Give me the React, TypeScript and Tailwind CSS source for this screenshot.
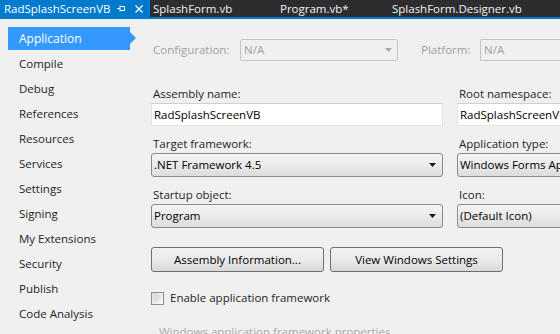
import React from "react";

const pages = [
  "Compile",
  "Debug",
  "References",
  "Resources",
  "Services",
  "Settings",
  "Signing",
  "My Extensions",
  "Security",
  "Publish",
  "Code Analysis",
];

const font = { fontFamily: '"Open Sans", "Noto Sans", sans-serif' };

function Arrow({ grey }: { grey?: boolean }) {
  return (
    <svg width="7" height="4" viewBox="0 0 7 4" className="shrink-0">
      <path d="M0 0H7L3.5 4Z" fill={grey ? "#a8a8a8" : "#1a1a1a"} />
    </svg>
  );
}

function Combo({ value, wide }: { value: string; wide?: boolean }) {
  return (
    <div className="h-[24px] flex items-center justify-between pl-[2px] pr-[6px] border border-[#8a8a8a] rounded-[3px] bg-gradient-to-b from-[#f4f4f4] via-[#ebebeb] to-[#dcdcdc] text-[#000]">
      <span className="whitespace-nowrap overflow-hidden">{value}</span>
      {wide ? <Arrow /> : null}
    </div>
  );
}

function Field({ label, children }: { label: string; children: React.ReactNode }) {
  return (
    <div className="flex flex-col">
      <div className="h-[16px] leading-[16px] mb-[1px] pl-[2px] text-[#1e1e1e] whitespace-nowrap">{label}</div>
      {children}
    </div>
  );
}

export default function App() {
  return (
    <div className="w-[560px] h-[334px] overflow-hidden bg-[#f0f0f0] text-[11.5px] flex flex-col" style={font}>
      {/* document tabs */}
      <div className="h-[17px] bg-[#2d2d30] flex text-[#f1f1f1] leading-[17px] shrink-0">
        <div className="w-[150px] bg-[#007acc] flex items-center pl-[4px] text-white">
          <span className="w-[110px] whitespace-nowrap">RadSplashScreenVB</span>
          <svg width="9" height="9" viewBox="0 0 9 9" className="ml-[3px]">
            <path d="M0 4.5H3M3 1.5V7.5M3 2.5H7.5V6.5H3" stroke="#fff" strokeWidth="1" fill="none" />
          </svg>
          <svg width="8" height="8" viewBox="0 0 8 8" className="ml-[9px]">
            <path d="M0.5 0.5L7.5 7.5M7.5 0.5L0.5 7.5" stroke="#fff" strokeWidth="1.2" />
          </svg>
        </div>
        <div className="w-[127px] pl-[3px] whitespace-nowrap">SplashForm.vb</div>
        <div className="w-[112px] pl-[3px] whitespace-nowrap">Program.vb*</div>
        <div className="pl-[3px] whitespace-nowrap">SplashForm.Designer.vb</div>
      </div>
      <div className="h-[2px] bg-[#007acc] shrink-0" />

      <div className="flex flex-1 min-h-0">
        {/* page list */}
        <div className="w-[140px] shrink-0 pt-[8px]">
          <div className="relative ml-[8px] w-[122px] h-[23px] bg-[#3399ff] text-white flex items-center pl-[11px] text-[12px]">
            Application
            <div className="absolute right-[-6px] top-[5px] w-0 h-0 border-y-[6px] border-y-transparent border-l-[6px] border-l-[#3399ff]" />
          </div>
          <div className="mt-[1px]">
            {pages.map((p) => (
              <div key={p} className="h-[25px] flex items-center pl-[19px] text-[#1e1e1e]">
                {p}
              </div>
            ))}
          </div>
        </div>

        {/* application settings */}
        <div className="flex-1 pl-[11px] pt-[20px] flex flex-col">
          <div className="flex items-center text-[#a0a0a0]">
            <span className="w-[89px] pl-[2px]">Configuration:</span>
            <div className="w-[158px] h-[22px] border border-[#c4c4c4] rounded-[2px] flex items-center justify-between pl-[3px] pr-[5px]">
              <span>N/A</span>
              <Arrow grey />
            </div>
            <span className="ml-[23px] w-[59px]">Platform:</span>
            <div className="flex-1 h-[22px] border border-r-0 border-[#c4c4c4] rounded-l-[2px] flex items-center pl-[3px]">
              <span>N/A</span>
            </div>
          </div>

          <div className="h-[1px] bg-[#a0a0a0] mt-[15px]" />

          <div className="grid grid-cols-[292px_1fr] gap-x-[14px] gap-y-[10px] mt-[10px]">
            <Field label="Assembly name:">
              <div className="h-[23px] bg-white border border-[#e3e3e3] border-t-[#d0d0d0] flex items-center pl-[2px] text-black">
                RadSplashScreenVB
              </div>
            </Field>
            <Field label="Root namespace:">
              <div className="h-[23px] bg-white border border-r-0 border-[#e3e3e3] border-t-[#d0d0d0] flex items-center pl-[2px] text-black whitespace-nowrap overflow-hidden">
                RadSplashScreenVB
              </div>
            </Field>
            <Field label="Target framework:">
              <Combo value=".NET Framework 4.5" wide />
            </Field>
            <Field label="Application type:">
              <Combo value="Windows Forms Application" />
            </Field>
            <Field label="Startup object:">
              <Combo value="Program" wide />
            </Field>
            <Field label="Icon:">
              <Combo value="(Default Icon)" />
            </Field>
          </div>

          <div className="flex gap-[6px] mt-[19px]">
            <button className="w-[173px] h-[25px] border border-[#707070] rounded-[3px] bg-gradient-to-b from-[#f2f2f2] via-[#ebebeb] to-[#d8d8d8] text-black">
              Assembly Information...
            </button>
            <button className="w-[173px] h-[25px] border border-[#707070] rounded-[3px] bg-gradient-to-b from-[#f2f2f2] via-[#ebebeb] to-[#d8d8d8] text-black">
              View Windows Settings
            </button>
          </div>

          <div className="flex items-center h-[16px] mt-[18px]">
            <div className="w-[13px] h-[13px] border border-[#8e8f8f] bg-gradient-to-br from-[#dcdcdc] to-[#fbfbfb] p-[2px]">
              <div className="w-full h-full bg-gradient-to-br from-[#d0d0d0] to-[#f4f4f4]" />
            </div>
            <span className="ml-[6px] text-[#1e1e1e]">Enable application framework</span>
          </div>

          <div className="mt-[18px] pl-[8px] leading-[16px] text-[#a8a8a8] whitespace-nowrap">Windows application framework properties</div>
        </div>
      </div>
    </div>
  );
}
